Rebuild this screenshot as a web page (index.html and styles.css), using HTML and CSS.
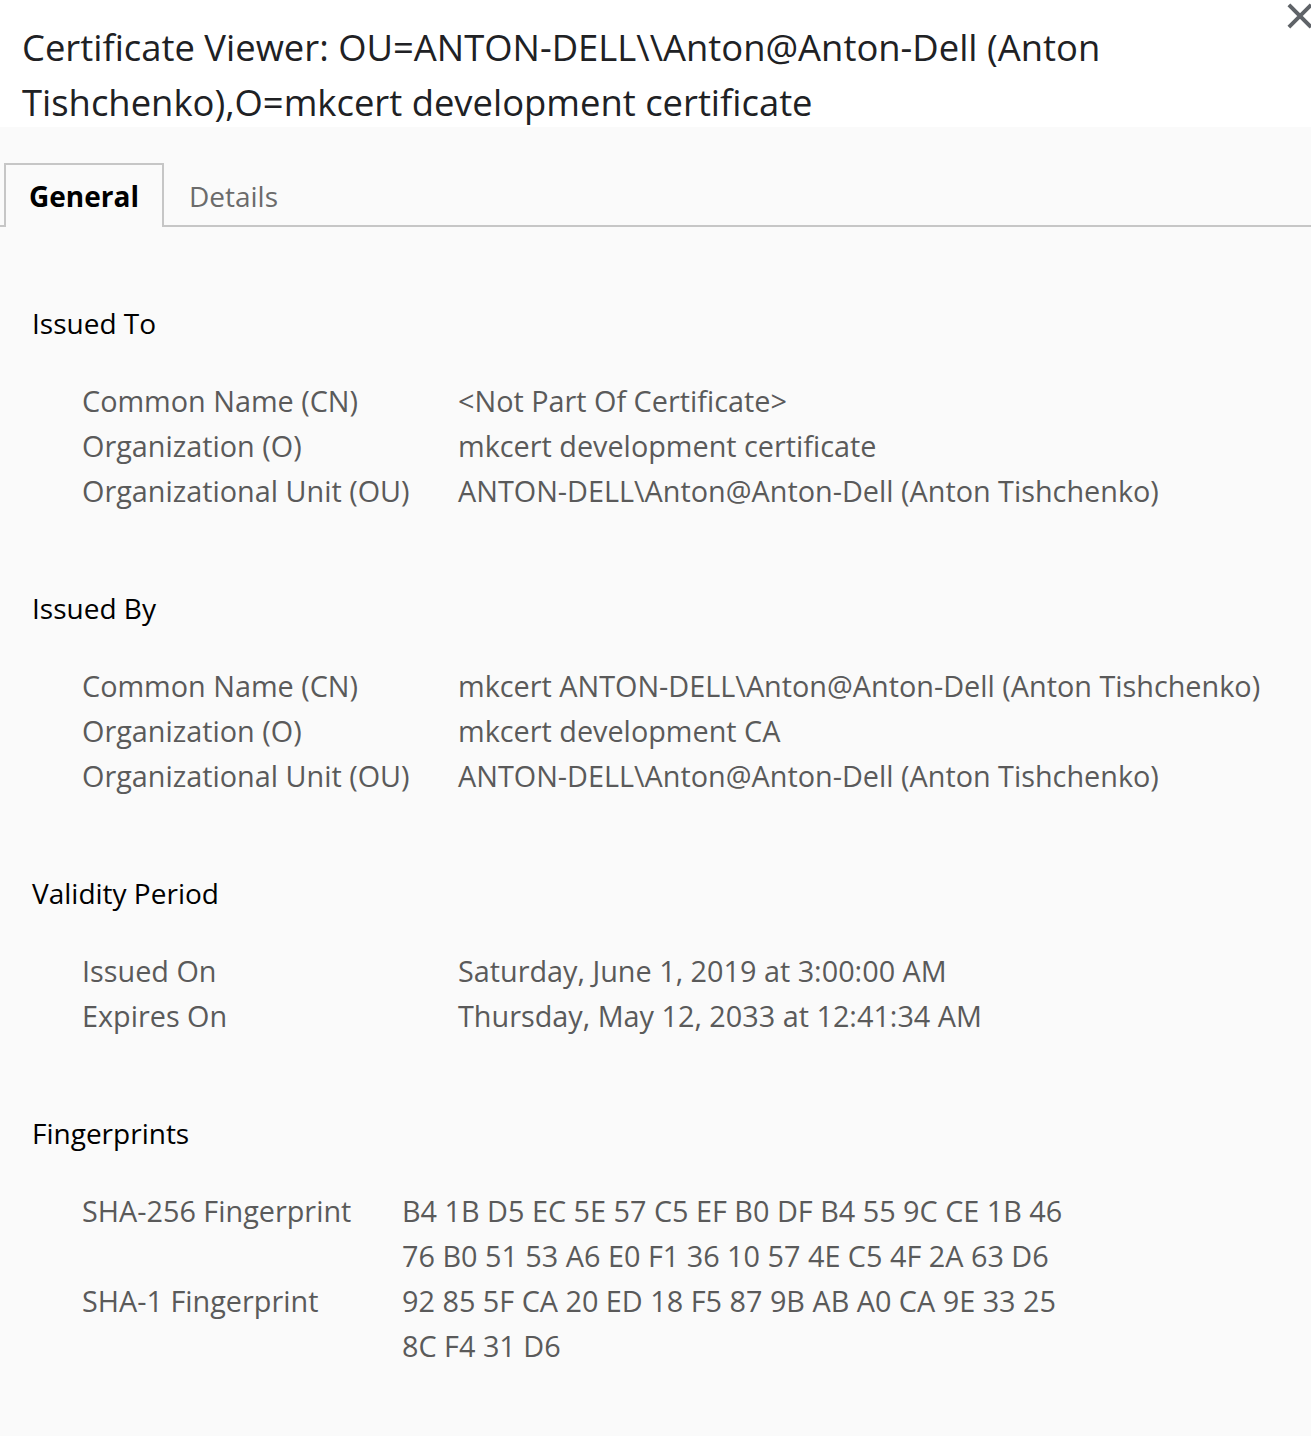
FILE: index.html
```html
<!DOCTYPE html>
<html lang="en">
<head>
<meta charset="utf-8">
<title>Certificate Viewer</title>
<link rel="stylesheet" href="styles.css">
</head>
<body>
<div class="dialog">
  <header class="header">
    <h1 class="title">Certificate Viewer: OU=ANTON-DELL\\Anton@Anton-Dell (Anton<br>Tishchenko),O=mkcert development certificate</h1>
    <button class="close" aria-label="Close">
      <svg viewBox="0 0 24 24" width="26" height="26"><path d="M3 3 L21 21 M21 3 L3 21" stroke="#5f6368" stroke-width="3.6" stroke-linecap="square" fill="none"/></svg>
    </button>
  </header>
  <main class="body">
    <nav class="tabs">
      <div class="tab active">General</div>
      <div class="tab">Details</div>
    </nav>

    <section class="section">
      <h2 class="heading">Issued To</h2>
      <div class="rows">
        <div class="label">Common Name (CN)</div><div class="value">&lt;Not Part Of Certificate&gt;</div>
        <div class="label">Organization (O)</div><div class="value">mkcert development certificate</div>
        <div class="label">Organizational Unit (OU)</div><div class="value">ANTON-DELL\Anton@Anton-Dell (Anton Tishchenko)</div>
      </div>
    </section>

    <section class="section">
      <h2 class="heading">Issued By</h2>
      <div class="rows">
        <div class="label">Common Name (CN)</div><div class="value">mkcert ANTON-DELL\Anton@Anton-Dell (Anton Tishchenko)</div>
        <div class="label">Organization (O)</div><div class="value">mkcert development CA</div>
        <div class="label">Organizational Unit (OU)</div><div class="value">ANTON-DELL\Anton@Anton-Dell (Anton Tishchenko)</div>
      </div>
    </section>

    <section class="section">
      <h2 class="heading">Validity Period</h2>
      <div class="rows">
        <div class="label">Issued On</div><div class="value">Saturday, June 1, 2019 at 3:00:00 AM</div>
        <div class="label">Expires On</div><div class="value">Thursday, May 12, 2033 at 12:41:34 AM</div>
      </div>
    </section>

    <section class="section">
      <h2 class="heading">Fingerprints</h2>
      <div class="rows rows-fp">
        <div class="label">SHA-256 Fingerprint</div>
        <div class="value"><span class="fp-line">B4 1B D5 EC 5E 57 C5 EF B0 DF B4 55 9C CE 1B 46</span><span class="fp-line">76 B0 51 53 A6 E0 F1 36 10 57 4E C5 4F 2A 63 D6</span></div>
        <div class="label">SHA-1 Fingerprint</div>
        <div class="value"><span class="fp-line">92 85 5F CA 20 ED 18 F5 87 9B AB A0 CA 9E 33 25</span><span class="fp-line">8C F4 31 D6</span></div>
      </div>
    </section>
  </main>
</div>
</body>
</html>
```

FILE: styles.css
```css
* { box-sizing: border-box; }

html, body {
  margin: 0;
  padding: 0;
  background: #fafafa;
}

body {
  font-family: "Open Sans", "Noto Sans", sans-serif;
  width: 1311px;
  min-height: 1436px;
  overflow: hidden;
}

.dialog {
  position: relative;
  min-height: 1436px;
}

.header {
  position: relative;
  height: 127px;
  background: #ffffff;
  padding: 20px 0 0 22px;
}

.title {
  margin: 0;
  font-size: 36.4px;
  font-weight: 400;
  line-height: 55px;
  color: #202124;
  white-space: nowrap;
}

.close {
  position: absolute;
  top: 3px;
  right: -2px;
  padding: 0;
  border: 0;
  background: none;
  width: 26px;
  height: 26px;
}

.close svg { display: block; }

.body {
  background: #fafafa;
  padding-top: 36px;
  padding-bottom: 60px;
}

.tabs {
  display: flex;
  padding-left: 4px;
  border-bottom: 2px solid #c6c6c6;
  height: 64px;
}

.tab {
  height: 64px;
  padding: 0 23px 0 23px;
  font-size: 28px;
  line-height: 62px;
  color: #6b6b6b;
  border: 2px solid transparent;
  border-bottom: 0;
}

.tab.active {
  color: #000;
  font-weight: 700;
  border-color: #c6c6c6;
  background: #fafafa;
  margin-bottom: -2px;
  height: 64px;
}

.section {
  padding-left: 32px;
}

.heading {
  margin: 0;
  font-size: 28px;
  font-weight: 400;
  line-height: 45px;
  color: #000;
}

.rows {
  display: grid;
  grid-template-columns: 376px 1fr;
  padding-left: 50px;
  margin-top: 32px;
  margin-bottom: 73px;
  font-size: 28.8px;
  line-height: 45px;
  color: #5a5a5a;
  white-space: nowrap;
}

.rows-fp {
  grid-template-columns: 320px 1fr;
}

.fp-line { display: block; }

.section:first-of-type { padding-top: 74px; }
```
